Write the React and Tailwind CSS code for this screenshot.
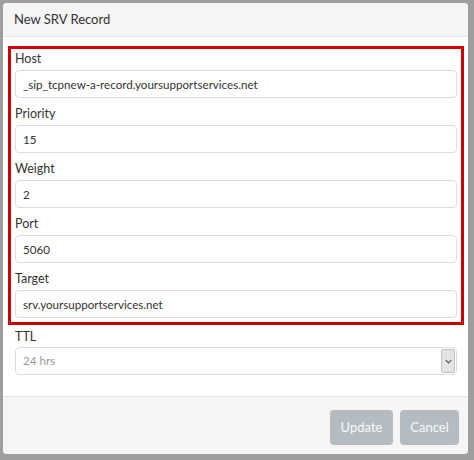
import React from "react"

const fields = [
  { label: "Host", value: "_sip_tcpnew-a-record.yoursupportservices.net" },
  { label: "Priority", value: "15" },
  { label: "Weight", value: "2" },
  { label: "Port", value: "5060" },
  { label: "Target", value: "srv.yoursupportservices.net" },
]

function Field({ label, value }) {
  return (
    <div className="mb-[6px] last:mb-0">
      <label className="block h-[20px] mb-[1px] pl-[-1px] text-[12.5px] leading-[19px] text-[#333]">{label}</label>
      <input
        readOnly
        value={value}
        className="block w-full h-[28px] px-[7px] border border-[#dcdcdc] rounded-[4px] bg-white text-[11.6px] text-[#333] outline-none"
      />
    </div>
  )
}

export default function App() {
  return (
    <div className="w-[474px] h-[460px] bg-[#9e9e9e] pt-[3px] pl-[3px] font-['Lato',sans-serif]">
      <div className="w-[465px] h-[451px] bg-white rounded-[4px] flex flex-col overflow-hidden">
        {/* Header */}
        <div className="h-[34px] shrink-0 flex items-center px-[11px] bg-[#f5f5f5] border-b border-[#e6e6e6]">
          <h3 className="text-[13px] text-[#333]">New SRV Record</h3>
        </div>

        {/* Body */}
        <div className="flex-1 pt-[9px] pl-[5px] pr-[4px]">
          <div className="border-[3px] border-[#cc0000] px-[4px] pt-0 pb-[4px]">
            {fields.map((f) => (
              <Field key={f.label} label={f.label} value={f.value} />
            ))}
          </div>
          <div className="px-[7px] pt-[2px]">
            <label className="block h-[20px] text-[12.5px] leading-[19px] text-[#333]">TTL</label>
            <div className="flex h-[28px] border border-[#dcdcdc] rounded-[4px] bg-white">
              <div className="flex-1 flex items-center px-[7px] text-[11.6px] text-[#999]">24 hrs</div>
              <div className="w-[14px] my-[1px] mr-[1px] flex items-center justify-center bg-[#e4e4e4] border border-[#c4c4c4] rounded-[2px]">
                <svg width="7" height="5" viewBox="0 0 7 5" fill="none" stroke="#606060" strokeWidth="1.2">
                  <path d="M0.8 1 L3.5 3.8 L6.2 1" />
                </svg>
              </div>
            </div>
          </div>
        </div>

        {/* Footer */}
        <div className="h-[58px] shrink-0 flex items-start justify-end gap-[7px] pt-[13px] pr-[9px] bg-[#f5f5f5] border-t border-[#e6e6e6]">
          <button className="w-[63px] h-[35px] rounded-[4px] bg-[#b4bcc2] text-[13px] text-white/90">Update</button>
          <button className="w-[59px] h-[35px] rounded-[4px] bg-[#b4bcc2] text-[13px] text-white/90">Cancel</button>
        </div>
      </div>
    </div>
  )
}
